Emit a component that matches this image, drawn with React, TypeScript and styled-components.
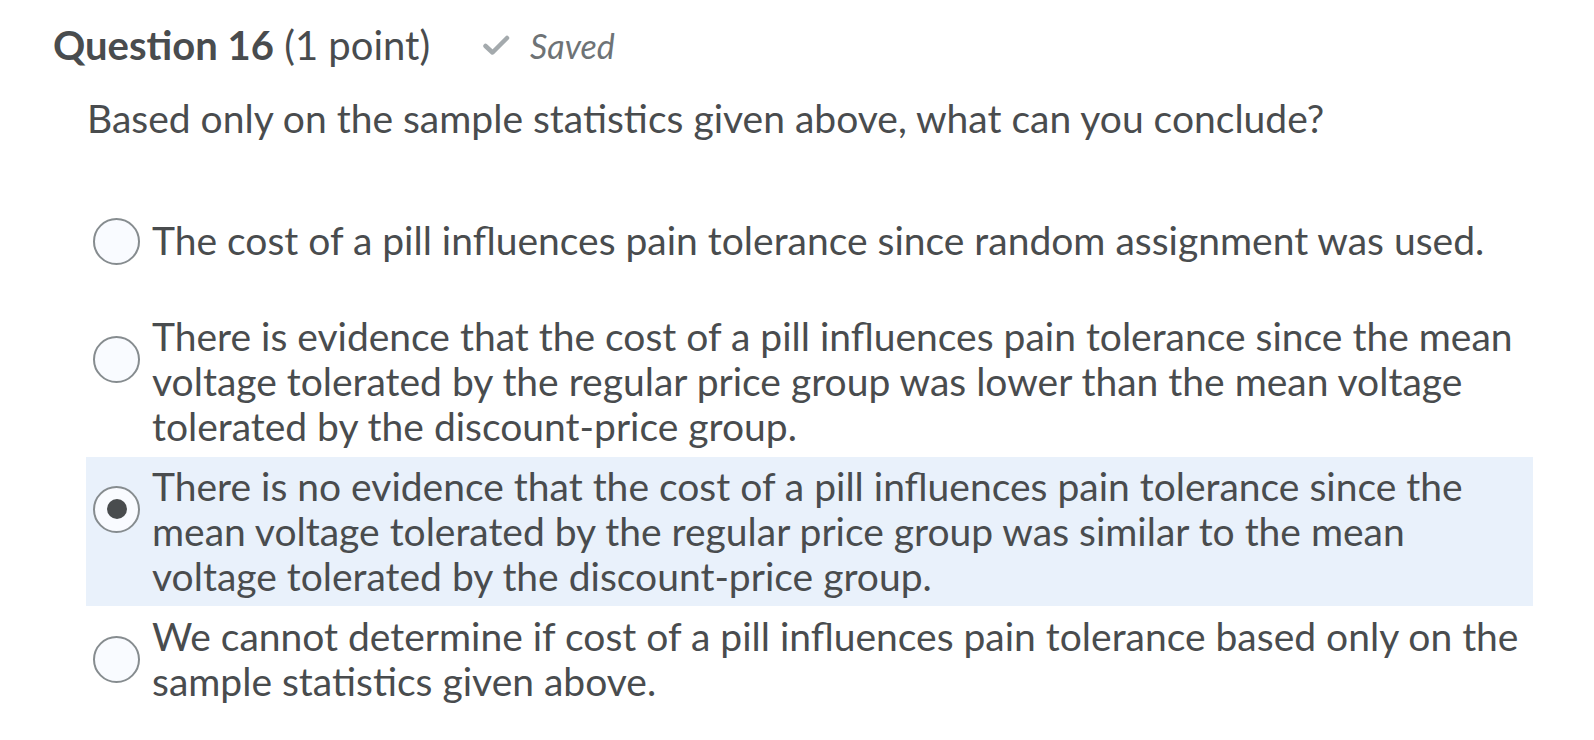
import React from "react";
import styled, { createGlobalStyle } from "styled-components";

const GlobalStyle = createGlobalStyle`
  html, body {
    margin: 0;
    padding: 0;
    background: #ffffff;
  }
  body {
    font-family: Lato, "Open Sans", "Liberation Sans", sans-serif;
    color: #494c4e;
  }
`;

const Page = styled.div`
  padding: 22px 0 0 53px;
  width: 1594px;
  box-sizing: border-box;
`;

const Header = styled.div`
  display: flex;
  align-items: center;
  height: 46px;
`;

const Title = styled.h2`
  margin: 0;
  font-size: 40px;
  font-weight: 400;
  line-height: 46px;
  color: #494c4e;

  strong {
    font-weight: 700;
  }
`;

const SavedTag = styled.span`
  display: inline-flex;
  align-items: center;
  gap: 20px;
  margin-left: 52px;
  font-size: 34px;
  font-style: italic;
  color: #6e7376;
`;

const Prompt = styled.p`
  margin: 28px 0 0 34px;
  font-size: 39px;
  line-height: 45px;
`;

const OptionList = styled.div`
  display: flex;
  flex-direction: column;
  gap: 1px;
  margin: 70px 0 0 33px;
  width: 1447px;
`;

const OptionRow = styled.label<{ $selected?: boolean; $extra?: number }>`
  display: grid;
  grid-template-columns: 66px 1fr;
  padding: 7px 0 7px 0;
  margin-bottom: ${(p) => p.$extra ?? 0}px;
  background: ${(p) => (p.$selected ? "#e9f1fb" : "transparent")};
  cursor: pointer;
`;

const RadioCell = styled.div`
  display: flex;
  align-items: center;
  padding-left: 7px;
  max-height: 90px;
`;

const Radio = styled.span<{ $checked?: boolean }>`
  width: 47px;
  height: 47px;
  box-sizing: border-box;
  border-radius: 50%;
  border: 2px solid #868c8f;
  background: #f9fbff;
  display: flex;
  align-items: center;
  justify-content: center;

  &::after {
    content: "";
    width: 20px;
    height: 20px;
    border-radius: 50%;
    background: ${(p) => (p.$checked ? "#494c4e" : "transparent")};
  }
`;

const OptionText = styled.div`
  font-size: 39px;
  line-height: 45px;
`;

const options = [
  "The cost of a pill influences pain tolerance since random assignment was used.",
  "There is evidence that the cost of a pill influences pain tolerance since the mean voltage tolerated by the regular price group was lower than the mean voltage tolerated by the discount-price group.",
  "There is no evidence that the cost of a pill influences pain tolerance since the mean voltage tolerated by the regular price group was similar to the mean voltage tolerated by the discount-price group.",
  "We cannot determine if cost of a pill influences pain tolerance based only on the sample statistics given above.",
];

const App = () => {
  const selected = 2;
  return (
    <Page>
      <GlobalStyle />
      <Header>
        <Title>
          <strong>Question 16</strong> (1 point)
        </Title>
        <SavedTag>
          <svg width="28" height="22" viewBox="0 0 28 22" fill="none">
            <path d="M3.5 12 L10.5 18.5 L25 4" stroke="#a4aaad" strokeWidth="4.5" strokeLinecap="round" strokeLinejoin="round" />
          </svg>
          Saved
        </SavedTag>
      </Header>
      <Prompt>Based only on the sample statistics given above, what can you conclude?</Prompt>
      <OptionList>
        {options.map((text, i) => (
          <OptionRow key={i} $selected={i === selected} $extra={i === 0 ? 34 : 0}>
            <RadioCell>
              <Radio $checked={i === selected} />
            </RadioCell>
            <OptionText>{text}</OptionText>
          </OptionRow>
        ))}
      </OptionList>
    </Page>
  );
};

export default App;
